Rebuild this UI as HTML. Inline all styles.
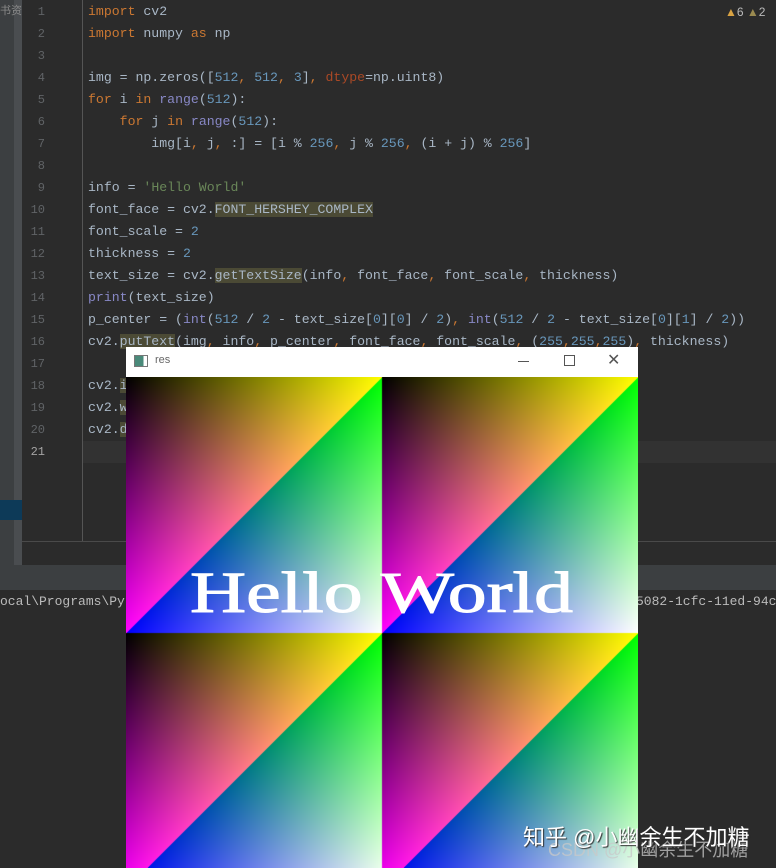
<!DOCTYPE html>
<html><head><meta charset="utf-8"><style>
body{margin:0;width:776px;height:868px;background:#2b2b2b;overflow:hidden;position:relative;font-family:"Liberation Mono",monospace}
.abs{position:absolute}
.code{position:absolute;left:88px;top:0;font-size:13.2px;color:#a9b7c6;white-space:pre}
.ln{position:absolute;left:0;width:45px;text-align:right;font-size:12px;color:#606366}
.l{position:absolute;height:22px;line-height:22px}
.k{color:#cc7832}.n{color:#6897bb}.s{color:#6a8759}.b{color:#8888c6}.p{color:#aa4926}.h{background:#4b4a35}
</style></head><body>
<div class="abs" style="left:0;top:0;width:22px;height:565px;background:#3c3f41"></div>
<div class="abs" style="left:14px;top:0;width:8px;height:565px;background:#4a4d50"></div>
<div class="abs" style="left:0;top:500px;width:22px;height:20px;background:#0d3a58"></div>
<div class="abs" style="left:0;top:2px;font-size:11px;color:#888;font-family:'Noto Sans CJK SC',sans-serif">书资</div>
<div class="abs" style="left:82px;top:0;width:1px;height:541px;background:#555"></div>
<div class="abs" style="left:83px;top:441px;width:693px;height:22px;background:#323232"></div>
<div class="abs" style="left:22px;top:541px;width:754px;height:1px;background:#4a4a4a"></div>
<div class="abs" style="left:0;top:565px;width:776px;height:25px;background:#3c3f41"></div>
<div class="abs" style="left:0;top:594px;font-size:13px;color:#bbb;white-space:nowrap">ocal\Programs\Py</div>
<div class="abs" style="left:636px;top:594px;font-size:13px;color:#bbb;white-space:nowrap">5082-1cfc-11ed-94c</div>
<div class="abs" style="left:725px;top:5px;font-size:12px;color:#bbb;font-family:'Liberation Sans',sans-serif"><span style="color:#d9a343">▲</span>6 <span style="color:#9a8a50">▲</span>2</div>
<div style="position:absolute;left:0;top:0;width:50px">
<div class="ln l" style="top:1px">1</div><div class="ln l" style="top:23px">2</div><div class="ln l" style="top:45px">3</div><div class="ln l" style="top:67px">4</div><div class="ln l" style="top:89px">5</div><div class="ln l" style="top:111px">6</div><div class="ln l" style="top:133px">7</div><div class="ln l" style="top:155px">8</div><div class="ln l" style="top:177px">9</div><div class="ln l" style="top:199px">10</div><div class="ln l" style="top:221px">11</div><div class="ln l" style="top:243px">12</div><div class="ln l" style="top:265px">13</div><div class="ln l" style="top:287px">14</div><div class="ln l" style="top:309px">15</div><div class="ln l" style="top:331px">16</div><div class="ln l" style="top:353px">17</div><div class="ln l" style="top:375px">18</div><div class="ln l" style="top:397px">19</div><div class="ln l" style="top:419px">20</div><div class="ln l" style="top:441px;color:#a4a3a3">21</div>
</div>
<div class="code">
<div class="l" style="top:1px"><span class="k">import</span> cv2</div>
<div class="l" style="top:23px"><span class="k">import</span> numpy <span class="k">as</span> np</div>
<div class="l" style="top:67px">img = np.zeros([<span class="n">512</span><span class="k">,</span> <span class="n">512</span><span class="k">,</span> <span class="n">3</span>]<span class="k">,</span> <span class="p">dtype</span>=np.uint8)</div>
<div class="l" style="top:89px"><span class="k">for</span> i <span class="k">in</span> <span class="b">range</span>(<span class="n">512</span>):</div>
<div class="l" style="top:111px">    <span class="k">for</span> j <span class="k">in</span> <span class="b">range</span>(<span class="n">512</span>):</div>
<div class="l" style="top:133px">        img[i<span class="k">,</span> j<span class="k">,</span> :] = [i % <span class="n">256</span><span class="k">,</span> j % <span class="n">256</span><span class="k">,</span> (i + j) % <span class="n">256</span>]</div>
<div class="l" style="top:177px">info = <span class="s">'Hello World'</span></div>
<div class="l" style="top:199px">font_face = cv2.<span class="h">FONT_HERSHEY_COMPLEX</span></div>
<div class="l" style="top:221px">font_scale = <span class="n">2</span></div>
<div class="l" style="top:243px">thickness = <span class="n">2</span></div>
<div class="l" style="top:265px">text_size = cv2.<span class="h">getTextSize</span>(info<span class="k">,</span> font_face<span class="k">,</span> font_scale<span class="k">,</span> thickness)</div>
<div class="l" style="top:287px"><span class="b">print</span>(text_size)</div>
<div class="l" style="top:309px">p_center = (<span class="b">int</span>(<span class="n">512</span> / <span class="n">2</span> - text_size[<span class="n">0</span>][<span class="n">0</span>] / <span class="n">2</span>)<span class="k">,</span> <span class="b">int</span>(<span class="n">512</span> / <span class="n">2</span> - text_size[<span class="n">0</span>][<span class="n">1</span>] / <span class="n">2</span>))</div>
<div class="l" style="top:331px">cv2.<span class="h">putText</span>(img<span class="k">,</span> info<span class="k">,</span> p_center<span class="k">,</span> font_face<span class="k">,</span> font_scale<span class="k">,</span> (<span class="n">255</span><span class="k">,</span><span class="n">255</span><span class="k">,</span><span class="n">255</span>)<span class="k">,</span> thickness)</div>
<div class="l" style="top:375px">cv2.<span class="h">i</span></div>
<div class="l" style="top:397px">cv2.<span class="h">w</span></div>
<div class="l" style="top:419px">cv2.<span class="h">d</span></div>
</div>
<div class="abs" style="left:126px;top:347px;width:512px;height:30px;background:#fff"></div>
<div class="abs" style="left:134px;top:355px;width:12px;height:10px;border:1px solid #777;background:linear-gradient(90deg,#4a8a7a 70%,#fff 70%)"></div>
<div class="abs" style="left:155px;top:354px;font-size:11px;color:#666;font-family:'Liberation Sans',sans-serif">res</div>
<div class="abs" style="left:518px;top:361px;width:11px;height:1px;background:#555"></div>
<div class="abs" style="left:564px;top:355px;width:9px;height:9px;border:1px solid #555"></div>
<div class="abs" style="left:607px;top:353px;font-size:16px;color:#555;font-family:'Liberation Sans',sans-serif;line-height:16px">✕</div>
<canvas id="c" width="512" height="491" style="position:absolute;left:126px;top:377px"></canvas>
<svg class="abs" style="left:0;top:0" width="776" height="868"><text x="190" y="612" font-family="Liberation Serif, serif" font-size="58" fill="#fff" stroke="#fff" stroke-width="1" textLength="383" lengthAdjust="spacingAndGlyphs">Hello World</text></svg>
<div class="abs" style="left:548px;top:836px;font-size:18px;color:rgba(200,200,200,.75);font-family:'Liberation Sans','Noto Sans CJK SC',sans-serif;white-space:nowrap">CSDN @小幽余生不加糖</div>
<div class="abs" style="left:523px;top:820px;font-size:22px;color:#fff;font-family:'Liberation Sans','Noto Sans CJK SC',sans-serif;white-space:nowrap;text-shadow:1px 1px 1px #333">知乎 @小幽余生不加糖</div>
<script>
var c=document.getElementById('c'),x=c.getContext('2d'),d=x.createImageData(512,491),a=d.data;
for(var i=0;i<491;i++)for(var j=0;j<512;j++){var k=(i*512+j)*4;a[k]=(i+j)%256;a[k+1]=j%256;a[k+2]=i%256;a[k+3]=255;}
x.putImageData(d,0,0);
</script>
</body></html>
